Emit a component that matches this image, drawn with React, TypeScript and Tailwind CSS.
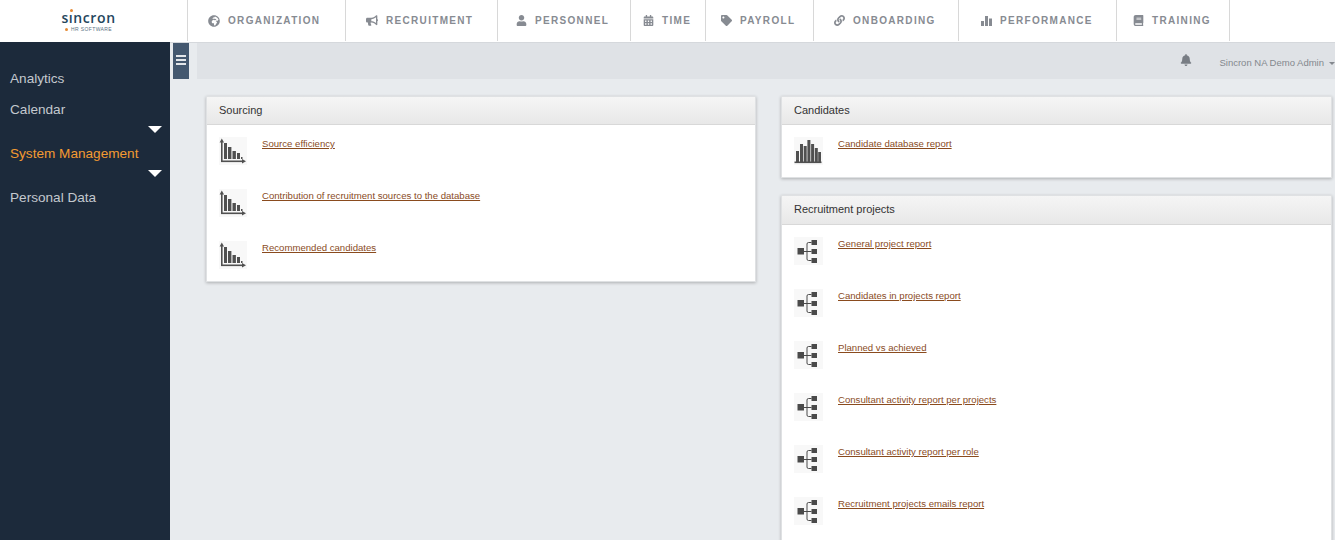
import { FaBell, FaBook, FaBullhorn, FaCalendarAlt, FaGlobeAfrica, FaLink, FaTag, FaUser } from "react-icons/fa";
import type { ReactNode } from "react";

function BarsIcon() {
  return (
    <svg width="11" height="11" viewBox="0 0 11 11" fill="currentColor">
      <rect x="0" y="6" width="3" height="5" />
      <rect x="4" y="1" width="3" height="10" />
      <rect x="8" y="3.5" width="3" height="7.5" />
    </svg>
  );
}

const navItems: { label: string; icon: ReactNode; width: string; pad: string }[] = [
  { label: "ORGANIZATION", icon: <FaGlobeAfrica size={12} />, width: "w-[158px]", pad: "pl-[20px]" },
  { label: "RECRUITMENT", icon: <FaBullhorn size={13} />, width: "w-[152px]", pad: "pl-[20px]" },
  { label: "PERSONNEL", icon: <FaUser size={11} />, width: "w-[133px]", pad: "pl-[17px]" },
  { label: "TIME", icon: <FaCalendarAlt size={11} />, width: "w-[75px]", pad: "pl-[11px]" },
  { label: "PAYROLL", icon: <FaTag size={11} />, width: "w-[108px]", pad: "pl-[14px]" },
  { label: "ONBOARDING", icon: <FaLink size={11} />, width: "w-[145px]", pad: "pl-[19px]" },
  { label: "PERFORMANCE", icon: <BarsIcon />, width: "w-[158px]", pad: "pl-[21px]" },
  { label: "TRAINING", icon: <FaBook size={11} />, width: "w-[113px]", pad: "pl-[15px]" },
];

function Logo() {
  return (
    <div className="flex w-[187px] shrink-0 flex-col items-center pt-[10px] pr-[10px]">
      <div className="relative font-['Open_Sans',sans-serif] text-[14px] leading-[16px] font-semibold tracking-[0.6px] text-[#24465c]">
        sıncron
        <span className="absolute top-[-1px] left-[9px] h-[3px] w-[3px] rounded-full bg-[#e58a35]" />
      </div>
      <div className="flex items-center gap-[3px] text-[5px] leading-[7px] text-[#5b7183]">
        <span className="h-[3px] w-[3px] rounded-full bg-[#e58a35]" />
        <span className="tracking-[0.4px]">HR SOFTWARE</span>
      </div>
    </div>
  );
}

// axis + descending bars
function ChartIcon() {
  return (
    <div className="h-[28px] w-[28px] shrink-0 bg-[#f8f8f8]">
      <svg width="28" height="28" viewBox="0 0 28 28" fill="#505050">
        <rect x="2" y="4" width="1.6" height="21" />
        <path d="M2.8 1.5 L5 5.5 L0.6 5.5 Z" />
        <rect x="2" y="23.5" width="22" height="1.6" />
        <path d="M27 24.3 L23 26.5 L23 22.1 Z" />
        <rect x="5" y="6" width="3" height="16" />
        <rect x="9" y="10" width="3.4" height="12" />
        <rect x="13.5" y="14" width="3.4" height="8" />
        <rect x="18" y="16" width="3" height="6" />
        <rect x="22" y="20" width="1.5" height="2" />
      </svg>
    </div>
  );
}

function HistogramIcon() {
  return (
    <div className="h-[28px] w-[29px] shrink-0 bg-[#f8f8f8]">
      <svg width="29" height="28" viewBox="0 0 29 28" fill="#505050">
        <rect x="0.5" y="24.5" width="27" height="1.6" />
        <rect x="2" y="14" width="3" height="11" />
        <rect x="6" y="7" width="3" height="18" />
        <rect x="9.7" y="9" width="3" height="16" />
        <rect x="13.4" y="3" width="3" height="22" />
        <rect x="17.1" y="7" width="3" height="18" />
        <rect x="20.8" y="11" width="3" height="14" />
        <rect x="24.2" y="15" width="2.8" height="10" />
      </svg>
    </div>
  );
}

function TreeIcon() {
  return (
    <div className="h-[28px] w-[29px] shrink-0 bg-[#f8f8f8]">
      <svg width="29" height="28" viewBox="0 0 29 28" fill="#4a4a4a">
        <rect x="3.5" y="11" width="6.5" height="6.5" />
        <rect x="17.5" y="3" width="5.5" height="5" />
        <rect x="17.5" y="12" width="5.5" height="5" />
        <rect x="17.5" y="21" width="5.5" height="5" />
        <path d="M10 14.5 H17.5 M17.5 5.5 H14.5 Q13 5.5 13 7 V22 Q13 23.5 14.5 23.5 H17.5" stroke="#4a4a4a" strokeWidth="1" fill="none" />
      </svg>
    </div>
  );
}

function Row({ icon, label }: { icon: ReactNode; label: string }) {
  return (
    <div className="flex h-[52px] gap-[15px] pt-[12px] pl-[12px]">
      {icon}
      <a className="h-[14px] text-[9.6px] leading-[14px] text-[#8a4b1e] underline" href="#">
        {label}
      </a>
    </div>
  );
}

function Card({ title, headerHeight, className, children }: { title: string; headerHeight: string; className?: string; children: ReactNode }) {
  return (
    <section className={`overflow-hidden border border-[#dfe1e3] bg-white shadow-[0_1px_3px_rgba(0,0,0,0.25)] ${className ?? ""}`}>
      <h2 className={`border-b border-[#d8d8d8] bg-gradient-to-b from-[#f5f5f5] to-[#e8e8e8] pl-[12px] text-[11px] leading-[27px] font-normal text-[#333] ${headerHeight}`}>
        {title}
      </h2>
      {children}
    </section>
  );
}

export default function App() {
  const projectReports = [
    "General project report",
    "Candidates in projects report",
    "Planned vs achieved",
    "Consultant activity report per projects",
    "Consultant activity report per role",
    "Recruitment projects emails report",
  ];

  return (
    <div className="flex h-[540px] flex-col overflow-hidden bg-[#e8ebee] font-['Liberation_Sans',Arial,sans-serif]">
      {/* Top nav */}
      <header className="flex h-[42px] shrink-0 bg-white">
        <Logo />
        <nav className="flex h-[41px] border-l border-[#d8d8d8]">
          {navItems.map((item) => (
            <div
              key={item.label}
              className={`flex items-center border-r border-[#d8d8d8] ${item.width} ${item.pad} gap-[8px] text-[10px] font-bold tracking-[1.32px] text-[#878b92]`}
            >
              <span className="flex w-[12px] justify-center">{item.icon}</span>
              <span>{item.label}</span>
            </div>
          ))}
        </nav>
      </header>

      <div className="flex min-h-0 flex-1">
        {/* Sidebar */}
        <aside className="w-[170px] shrink-0 bg-[#1c2a3b] pt-[27px] pl-[10px] text-[13.6px] leading-[20px] text-[#c3c8ce]">
          <div className="h-[31px]">Analytics</div>
          <div className="h-[20px]">Calendar</div>
          <div className="flex h-[24px] items-start justify-end pt-[6px] pr-[8px]">
            <span className="h-0 w-0 border-x-[7px] border-t-[7px] border-x-transparent border-t-white" />
          </div>
          <div className="h-[20px] text-[#f39a32]">System Management</div>
          <div className="flex h-[24px] items-start justify-end pt-[6px] pr-[8px]">
            <span className="h-0 w-0 border-x-[7px] border-t-[7px] border-x-transparent border-t-white" />
          </div>
          <div className="h-[20px]">Personal Data</div>
        </aside>

        <main className="min-w-0 flex-1">
          <div className="flex h-[37px] border-t border-[#d5d8dc] pl-[3px]">
            <div className="flex h-[36px] w-[16px] shrink-0 flex-col items-center gap-[2px] bg-[#44586f] pt-[12px]">
              <span className="h-[2px] w-[10px] bg-[#e4e7ea]" />
              <span className="h-[2px] w-[10px] bg-[#e4e7ea]" />
              <span className="h-[2px] w-[10px] bg-[#e4e7ea]" />
            </div>
            <div className="ml-[8px] flex h-[36px] flex-1 items-center justify-end bg-[#dfe2e6] text-[9.5px] whitespace-nowrap text-[#84888e]">
              <FaBell size={12} className="mr-[27px] mb-[3px] text-[#787d84]" />
              <span className="mt-[5px]">Sincron NA Demo Admin</span>
              <span className="mt-[5px] ml-[5px] h-0 w-0 border-x-[3px] border-t-[3px] border-x-transparent border-t-[#84888e]" />
            </div>
          </div>

          <div className="grid grid-cols-[550px_551px] gap-x-[25px] pt-[17px] pl-[36px]">
            <div>
              <Card title="Sourcing" headerHeight="h-[28px]">
                <Row icon={<ChartIcon />} label="Source efficiency" />
                <Row icon={<ChartIcon />} label="Contribution of recruitment sources to the database" />
                <Row icon={<ChartIcon />} label="Recommended candidates" />
              </Card>
            </div>
            <div className="flex flex-col gap-[17px]">
              <Card title="Candidates" headerHeight="h-[28px]">
                <Row icon={<HistogramIcon />} label="Candidate database report" />
              </Card>
              <Card title="Recruitment projects" headerHeight="h-[29px]" className="pb-[12px]">
                {projectReports.map((label) => (
                  <Row key={label} icon={<TreeIcon />} label={label} />
                ))}
              </Card>
            </div>
          </div>
        </main>
      </div>
    </div>
  );
}
